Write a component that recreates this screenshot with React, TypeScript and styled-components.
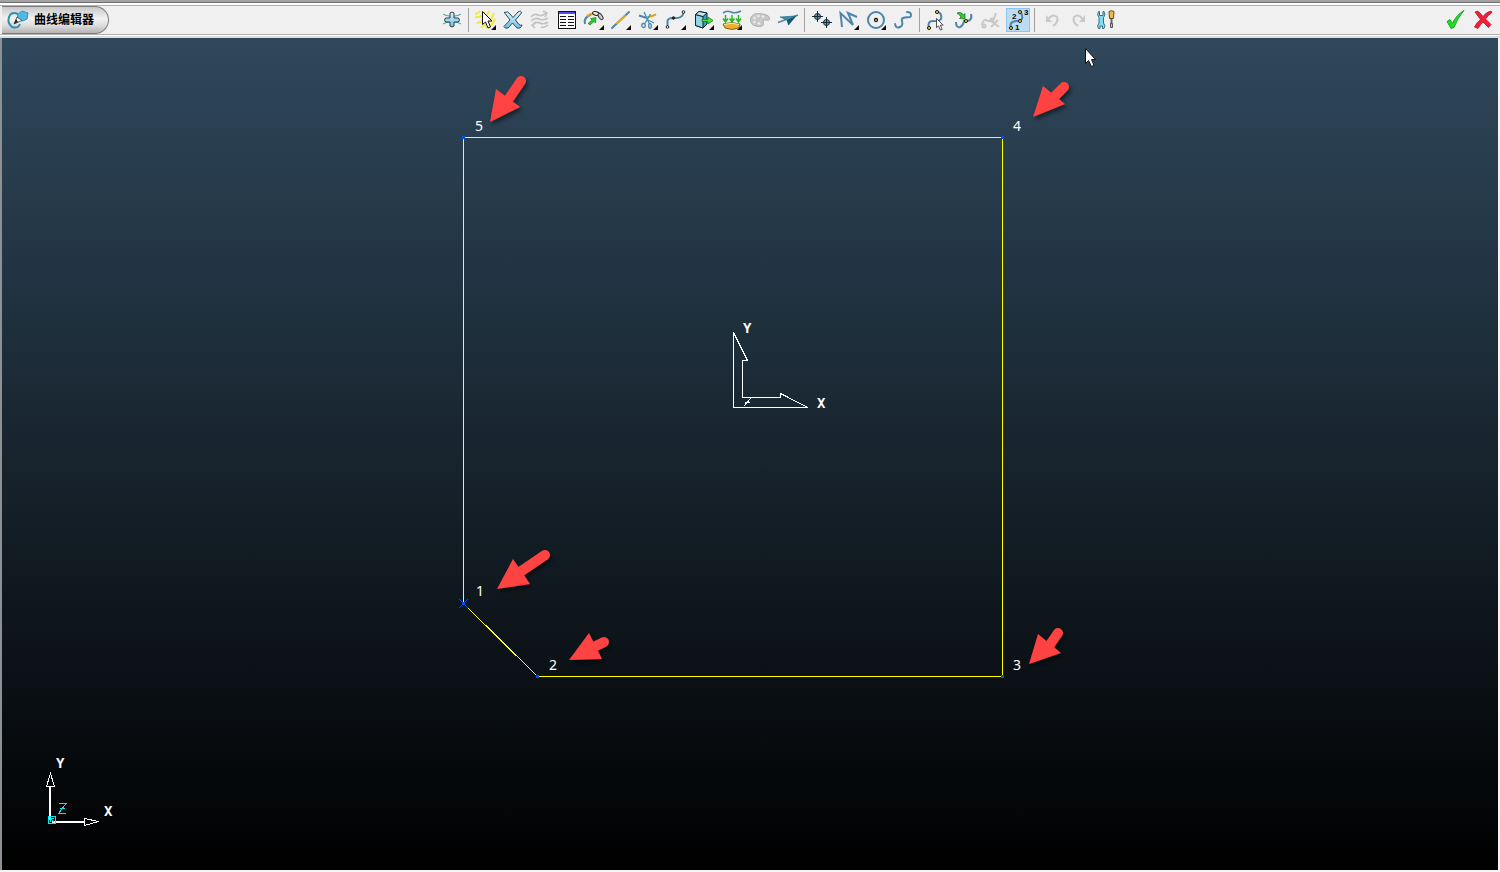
import React from "react";
import styled, { createGlobalStyle } from "styled-components";

const GlobalStyle = createGlobalStyle`
  * { box-sizing: border-box; }
  html, body, #root { height: 100%; }
  body { margin: 0; background: #f0f0f0; font-family: "Liberation Sans", "Noto Sans CJK SC", sans-serif; }
`;

const Window = styled.div`
  display: flex;
  flex-direction: column;
  height: 100%;
  border-top: 2px solid #a3a3a3;
  border-bottom: 2px solid #f4f4f4;
`;

const Toolbar = styled.header`
  display: flex;
  align-items: center;
  height: 36px;
  flex: none;
  padding: 0 3px 0 2px;
  background: #f0f0f0;
  border-top: 1px solid #6f6f6f;
  border-bottom: 2px solid #dcdcdc;
  box-shadow: inset 0 2px #fff, inset 0 3px #b0b0b0, inset 0 -1px #fff, inset 0 -2px #b0b0b0;
`;

const Title = styled.h1`
  display: flex;
  align-items: center;
  gap: 4px;
  height: 28px;
  margin: 0;
  padding: 0 14px 0 4px;
  border: 1px solid #7c7c7c;
  border-left: 0;
  border-radius: 0 14px 14px 0;
  background: linear-gradient(#c8c8c8, #f2f2f2 45%, #dedede 70%, #b4b4b4);
  color: #000;
  font-size: 12px;
  font-weight: 700;
  line-height: 16px;
`;

const Tools = styled.div`
  display: flex;
  flex: 1;
  justify-content: center;
  padding-left: 7px;
`;

const Group = styled.div`
  display: flex;
  align-items: center;
  height: 24px;
  padding: 0 3px;
  & + & { border-left: 1px solid #a0a0a0; }
`;

const ToolButton = styled.button<{ $wide?: boolean }>`
  display: flex;
  align-items: center;
  justify-content: center;
  width: ${(p) => (p.$wide ? 28 : 27)}px;
  height: 24px;
  padding: 0;
  border: 0;
  background: transparent;
  &[aria-pressed="true"] svg {
    background: #bcdcf4;
    outline: 1px solid #90c4f0;
    outline-offset: -1px;
  }
`;

const Icon = styled.svg`
  display: block;
  width: 24px;
  height: 24px;
  overflow: visible;
`;

const Viewport = styled.main`
  flex: 1;
  min-height: 0;
  border-left: 2px solid #8c9196;
  border-right: 2px solid #f4f4f4;
  background: linear-gradient(#2f485c, #000);
  overflow: hidden;
`;

const Scene = styled.svg`
  display: block;
  width: 100%;
  height: 100%;
`;

const PointLabel = styled.text`
  fill: #fff;
  font: 400 14px "Noto Sans", sans-serif;
`;

const AxisLabel = styled.text`
  fill: #fff;
  font: 700 14px "DejaVu Sans Mono", monospace;
`;

const BLUE = "#4b86ad";
const Dot = ({ x, y, fill = "#e8c020", r = 2 }: { x: number; y: number; fill?: string; r?: number }) => (
  <circle cx={x} cy={y} r={r} fill={fill} stroke="#222" />
);
const Cursor = ({ x, y, size = 1 }: { x: number; y: number; size?: number }) => (
  <path
    transform={`translate(${x} ${y}) scale(${size})`}
    d="M0 0V13L3 10.500L5.500 16.500L8 15.500L5.500 9.500H9.500Z"
    fill="#fff"
    stroke="#111"
  />
);

type Tool = { label: string; menu?: boolean; wide?: boolean; pressed?: boolean; disabled?: boolean; art: React.ReactNode };

const groups: Tool[][] = [
  [
    {
      label: "插入",
      art: (
        <g fill="none">
          <path d="M3 6C8 9 16 9 21 6M3 16C8 13 16 13 21 16" stroke="#3d9b9e" />
          <path
            d="M10 5Q12 3 14 5V10H18.500Q20.500 12 18.500 14H14V18Q12 20 10 18V14H5.500Q3.500 12 5.500 10H10Z"
            fill="url(#ice)"
            stroke="#243c50"
          />
        </g>
      ),
    },
  ],
  [
    {
      label: "选择",
      menu: true,
      art: (
        <>
          <path
            d="M1 9Q7 10 11 4M3 15Q11 14 15 3M7 19Q16 16 20 5M12 20Q19 17 21 11M1 6Q4 6 6 3"
            fill="none"
            stroke="#f4ea2c"
            strokeWidth="2"
          />
          <Cursor x={8.5} y={3.5} />
        </>
      ),
    },
    {
      label: "删除",
      art: (
        <path
          d="M3 4.500Q7 2.500 9 6L12 9.500L17 4Q20 2 20.500 5L14.500 12L17.500 16Q19.500 18 21 17Q20 21 16 20L11.500 15L7 20Q4 21 3 18.500L9 12L6 8Q5 6 3 4.500Z"
          fill="url(#ice)"
          stroke="#2c485e"
        />
      ),
    },
    {
      label: "变形",
      disabled: true,
      art: (
        <path
          d="M3 9Q6 5 10 7T18 5M15 3L19 5L17 9M3 13Q7 9 11 11T20 10M20 14Q16 17 12 15T5 17M8 14L4 17L7 20M13 19Q17 20 20 17"
          fill="none"
          stroke="#c2c2c2"
          strokeWidth="1.600"
        />
      ),
    },
    {
      label: "列表",
      art: (
        <>
          <rect x="3.500" y="3.500" width="17" height="17" fill="#fff" stroke="#111" />
          <path d="M4 5H20" stroke="#4d50ef" strokeWidth="2" />
          <path d="M5 8.500H11M13 8.500H19M5 11.500H11M13 11.500H19M5 14.500H11M13 14.500H19M5 17.500H11M13 17.500H19" stroke="#111" />
        </>
      ),
    },
    {
      label: "修改",
      menu: true,
      art: (
        <g fill="none">
          <path d="M3 16Q1 10 9 6.500" stroke={BLUE} strokeWidth="2" />
          <path d="M5 8.500Q8 5 13 6" stroke="#dfa51d" strokeWidth="2" />
          <ellipse cx="14" cy="5.500" rx="3.500" ry="1.800" fill="#eee" stroke="#222" transform="rotate(15 14 5.500)" />
          <ellipse cx="18.500" cy="8.500" rx="1.800" ry="3.500" fill="#ccc" stroke="#333" transform="rotate(-35 18.500 8.500)" />
          <path d="M6 15.500L10 12L8.500 10.500L14 9.500L13.500 15L12 13.500L8 17Z" fill="#28c82e" stroke="#17751c" strokeWidth=".6" />
        </g>
      ),
    },
    {
      label: "直线",
      menu: true,
      art: (
        <g strokeWidth="2" strokeLinecap="round">
          <path d="M3 20L20 4" stroke={BLUE} />
          <path d="M8 15L16 8" stroke="#e6ae22" />
        </g>
      ),
    },
    {
      label: "修剪",
      menu: true,
      wide: true,
      art: (
        <g fill="none" stroke={BLUE}>
          <path d="M3 7.500L11 10" strokeWidth="2" />
          <path d="M11 9.500Q15 8.500 20 6.500" stroke="#dfa51d" strokeWidth="2" />
          <path d="M8 4L13.500 16M14.500 6L8.500 16M12 12L18 15" stroke="#3f93aa" strokeWidth="1.300" />
          <ellipse cx="7.500" cy="17.500" rx="1.800" ry="2" strokeWidth="1.300" />
          <ellipse cx="14" cy="18" rx="1.300" ry="2.300" strokeWidth="1.300" />
        </g>
      ),
    },
    {
      label: "样条曲线",
      menu: true,
      wide: true,
      art: (
        <>
          <path d="M3.500 19V13Q4 10 9 10Q19 11 19.500 4" fill="none" stroke={BLUE} strokeWidth="2" />
          <Dot x={3.5} y={19} fill="#fff" r={1.3} />
          <Dot x={9.5} y={10} fill="#222" r={1.3} />
          <Dot x={19.5} y={4} fill="#fff" r={1.3} />
        </>
      ),
    },
    {
      label: "提取",
      menu: true,
      wide: true,
      art: (
        <>
          <path d="M3.500 6.500L7 3.500L15 5V16L11 20L3.500 17.500Z" fill="#3d9dbd" stroke="#14232a" />
          <path d="M3.500 6.500L11 8.500V20L3.500 17.500Z" fill="#8fd6ea" stroke="#14232a" />
          <path d="M3.500 6.500L7 3.500L15 5L11 8.500Z" fill="#c0e9f4" stroke="#14232a" />
          <path d="M10 11.500H16V9L21 12.500L16 16V13.500H10Z" fill="#4bed29" stroke="#1e7516" strokeWidth=".8" />
        </>
      ),
    },
    {
      label: "投影",
      menu: true,
      wide: true,
      art: (
        <>
          <path d="M3 5Q7 2 11 4T21 3" fill="none" stroke={BLUE} strokeWidth="1.600" />
          <path d="M3 16Q12 13 20 16L19 20Q12 23 5 20Z" fill="#ecae2b" stroke="#6b4a12" strokeWidth=".8" />
          <path d="M4 16.500Q12 14 19 16.500" fill="none" stroke="#fff0a0" />
          <path
            d="M5.500 7V13M12 7V13M18.500 7V13M3 10.500L5.500 14L8 10.500M9.500 10.500L12 14L14.500 10.500M16 10.500L18.500 14L21 10.500"
            fill="none"
            stroke="#28b91e"
            strokeWidth="1.500"
          />
        </>
      ),
    },
    {
      label: "颜色",
      disabled: true,
      wide: true,
      art: (
        <>
          <path d="M2.500 13Q2 6 10 5.500Q21 6 21.500 10Q22 13 18 12Q15 11 15 14Q17 17 13 18.500Q4 19 2.500 13Z" fill="#c9c9c9" stroke="#b0b0b0" />
          <g fill="#f0f0f0">
            <circle cx="6.500" cy="10" r="1.200" />
            <circle cx="10.500" cy="8" r="1.200" />
            <circle cx="15" cy="8.500" r="1.200" />
            <circle cx="6.500" cy="14" r="1.200" />
            <circle cx="11" cy="15.500" r="1.200" />
          </g>
        </>
      ),
    },
    {
      label: "方向",
      art: (
        <>
          <path d="M2 14.500L22 7" stroke={BLUE} strokeWidth="1.500" />
          <path d="M4 9L20 8L12.500 17L11 12Z" fill="#348caf" stroke="#24617c" strokeWidth=".6" />
          <path d="M11 12L20 8L12.500 17Z" fill="#185672" />
        </>
      ),
    },
  ],
  [
    {
      label: "点",
      art: (
        <g fill="#6b9fbd" stroke="#162a36">
          <circle cx="7.500" cy="8.500" r="3" />
          <path d="M7.500 3V14M2 8.500H13" />
          <circle cx="16.500" cy="14.500" r="3" />
          <path d="M16.500 9V20M11 14.500H22" />
        </g>
      ),
    },
    { label: "折线", menu: true, art: <path d="M5 19L3.500 5L16 17L11 5L20 9" fill="none" stroke={BLUE} strokeWidth="2" /> },
    {
      label: "圆",
      menu: true,
      art: (
        <>
          <circle cx="12" cy="12" r="8" fill="none" stroke={BLUE} strokeWidth="2" />
          <circle cx="12" cy="12" r="1.500" fill="#fff" stroke="#111" strokeWidth="1.300" />
        </>
      ),
    },
    {
      label: "曲线",
      art: <path d="M4 16Q5 21 9 19C15 16 8 12 12 10C17 8 20 11 20 7Q20 4 16 4" fill="none" stroke={BLUE} strokeWidth="2" strokeLinecap="round" />,
    },
  ],
  [
    {
      label: "选择点",
      art: (
        <>
          <path d="M4 20Q2 13 8 13Q18 14 16 7Q15 4 12 4" fill="none" stroke={BLUE} strokeWidth="2" />
          <Dot x={12} y={4} r={1.6} />
          <Dot x={4} y={20} r={1.6} />
          <Cursor x={11.5} y={10.5} size={0.7} />
        </>
      ),
    },
    {
      label: "插入点",
      art: (
        <>
          <path d="M4 14Q4 20 8 19Q11 18 12 13Q21 14 19 6" fill="none" stroke={BLUE} strokeWidth="2" />
          <path d="M5 5Q9 3 11.500 7L13 5.500V11L7.500 10.500L9 9Q8 7 5 5Z" fill="#32c53a" stroke="#196f20" strokeWidth=".7" />
          <Dot x={14} y={13} r={1.6} />
        </>
      ),
    },
    {
      label: "删除点",
      disabled: true,
      art: (
        <g fill="none" stroke="#c8c8c8" strokeWidth="2">
          <path d="M3 17Q4 10 9 13Q15 14 17 5M11 12L20 19M19 12L12 19" />
          <circle cx="5" cy="18" r="1.500" />
          <circle cx="13" cy="12" r="1.500" />
        </g>
      ),
    },
    {
      label: "点编号",
      pressed: true,
      art: (
        <>
          <path d="M5 19Q3 14 10 13Q19 13 15 5" fill="none" stroke={BLUE} strokeWidth="2" />
          <Dot x={14} y={4} r={1.6} />
          <Dot x={14} y={13} r={1.6} />
          <Dot x={5} y={20} r={1.6} />
          <g fill="#050510" fontFamily="Liberation Sans, sans-serif" fontSize="8" fontWeight="700">
            <text x="6" y="11">2</text>
            <text x="18" y="7">3</text>
            <text x="9" y="22">1</text>
          </g>
        </>
      ),
    },
  ],
  [
    {
      label: "撤销",
      disabled: true,
      art: (
        <g fill="none" stroke="#c9c9c9" strokeWidth="2">
          <path d="M8 12Q12 5 17 9Q19 14 13 18" />
          <path d="M6 7V14H12Z" fill="#c9c9c9" stroke="none" />
        </g>
      ),
    },
    {
      label: "重做",
      disabled: true,
      art: (
        <g fill="none" stroke="#c9c9c9" strokeWidth="2">
          <path d="M16 12Q12 5 7 9Q5 14 11 18" />
          <path d="M18 7V14H12Z" fill="#c9c9c9" stroke="none" />
        </g>
      ),
    },
    {
      label: "选项",
      art: (
        <>
          <path
            d="M4.500 3.500Q2.500 7 5 9.500V15Q2.500 18 4.500 20.500H6V18H8.500V20.500H10Q12 18 9.500 15V9.500Q12 7 10 3.500H9V7.500H5.500V3.500Z"
            fill="#7fdcf2"
            stroke="#3b6f80"
          />
          <path d="M15 3.500Q17.500 2 20 3.500L19.500 10.500H15.500Z" fill="#e4bd59" stroke="#644c23" />
          <path d="M17.500 11V16" stroke="#666" strokeWidth="2" />
          <path d="M16.500 15.500H18.500V19.500H16.500Z" fill="#bbb" stroke="#555" />
        </>
      ),
    },
  ],
];

// Every arrow is a head (tip and two barbs) with a round-ended shaft.
const arrows = [
  { head: "488,84 494,51 518,69", shaft: "M506 62L519 43" },
  { head: "1031,79 1041,48 1063,66", shaft: "M1051 60L1062 49" },
  { head: "1027,626 1036,596 1059,615", shaft: "M1047 608L1056 595" },
  { head: "495,551 511,521 528,546", shaft: "M518 534L543 517" },
  { head: "567,622 587,595 600,621", shaft: "M592 609L602 604" },
];

const vertices = [
  { n: 1, x: 461, y: 565, tx: 474, ty: 558 },
  { n: 2, x: 535, y: 638, tx: 547, ty: 632 },
  { n: 3, x: 1000, y: 638, tx: 1011, ty: 632 },
  { n: 4, x: 1000, y: 99, tx: 1011, ty: 93 },
  { n: 5, x: 461, y: 99, tx: 473, ty: 93 },
];

const ToolItem = ({ tool }: { tool: Tool }) => (
  <ToolButton type="button" aria-label={tool.label} aria-pressed={tool.pressed} disabled={tool.disabled} $wide={tool.wide}>
    <Icon viewBox="0 0 24 24" aria-hidden="true">
      {tool.art}
      {tool.menu && <path d="M22 17V22H17Z" fill="#160808" />}
    </Icon>
  </ToolButton>
);

export default function App() {
  return (
    <Window>
      <GlobalStyle />
      <Toolbar>
        <Title>
          <Icon viewBox="0 0 24 24" aria-hidden="true">
            <path d="M12 6Q5 3 3 9Q1 15 6 19Q12 21 14 16" fill="none" stroke="#2d91ad" strokeWidth="2" />
            <path d="M12 6L16 3L22 5L21 11L17 13L11 11Z" fill="#4fb9e2" stroke="#3695b5" />
            <path d="M8 16L11 9L16 12.500Z" fill="#f4f4f4" stroke="#444" strokeWidth=".8" />
            <path d="M8 16L10 11L12 14Z" fill="#222" />
          </Icon>
          曲线编辑器
        </Title>
        <Tools role="toolbar">
          {groups.map((group, i) => (
            <Group key={i}>
              {group.map((tool) => (
                <ToolItem key={tool.label} tool={tool} />
              ))}
            </Group>
          ))}
        </Tools>
        <ToolButton type="button" aria-label="确定" $wide>
          <Icon viewBox="0 0 24 24" aria-hidden="true">
            <path d="M4 13.500L7 11.500L9.500 15.500Q13 7 21 2.500Q14.500 10 11 19.500L8 20.500Z" fill="#18e51c" stroke="#128b24" strokeWidth=".8" />
          </Icon>
        </ToolButton>
        <ToolButton type="button" aria-label="取消" $wide>
          <Icon viewBox="0 0 24 24" aria-hidden="true">
            <path
              d="M4 4Q7 2 9 5L12 8.500Q15 4 20 3L21 4.500Q17 7 14.500 11L20 16.500L17.500 19.500L12 14Q9 17 7 20.500L3.500 19Q6 14 9.500 11.500Z"
              fill="#f51f35"
              stroke="#a71835"
              strokeWidth=".8"
            />
          </Icon>
        </ToolButton>
      </Toolbar>
      <Viewport>
        <Scene aria-label="曲线编辑器">
          <defs>
            <linearGradient id="ice" x1="0" y1="0" x2="0" y2="1">
              <stop offset="0" stopColor="#e0f6fd" />
              <stop offset="1" stopColor="#6fc0e2" />
            </linearGradient>
            <filter id="shade" x="-20%" y="-20%" width="150%" height="150%">
              <feDropShadow dx="2" dy="3" stdDeviation="2" floodColor="#000" floodOpacity=".5" />
            </filter>
          </defs>
          <path d="M461.500 565.500V99.500H1000.500V638.500H535.500Z" fill="none" stroke="#ffff00" shapeRendering="crispEdges" />
          {vertices.map((v) => (
            <g key={v.n}>
              <rect x={v.x - 1} y={v.y - 1} width="3" height="3" fill="#0050e6" />
              <PointLabel x={v.tx} y={v.ty}>{v.n}</PointLabel>
            </g>
          ))}
          <path d="M457 561L466 570M466 561L457 570" stroke="#0050e6" />
          <g fill="none" stroke="#fff" shapeRendering="crispEdges">
            <path d="M731.500 294.500V369.500H806L778.500 355.500V359.500H740.500V322.500H745.500L731.500 294.500" />
            <path d="M748.500 360.500L741.500 368.500M743 364.500H748" />
          </g>
          <AxisLabel x="741" y="295">Y</AxisLabel>
          <AxisLabel x="815" y="370">X</AxisLabel>
          <g fill="none" stroke="#fff" shapeRendering="crispEdges">
            <path d="M48 749V782M50 784H82" strokeWidth="2" />
            <path d="M48.500 735.500L44.500 748.500H52.500ZM82.500 780.500V787.500L96.500 783.500Z" />
          </g>
          <path d="M46.500 778.500H53.500V785.500H46.500ZM48.500 780.500L52 784M48.500 784V780.500H52" fill="none" stroke="#00f0f0" shapeRendering="crispEdges" />
          <path d="M56.500 765.500H64L56.500 775.500H64M58 770.500H63" fill="none" stroke="#00f0f0" shapeRendering="crispEdges" />
          <AxisLabel x="54" y="730">Y</AxisLabel>
          <AxisLabel x="102" y="778">X</AxisLabel>
          {arrows.map((a) => (
            <g key={a.head} filter="url(#shade)">
              <polygon points={a.head} fill="#ff4242" />
              <path d={a.shaft} stroke="#ff4242" strokeWidth="10" strokeLinecap="round" />
            </g>
          ))}
          <path d="M1083.500 10.500V25.500L1086.500 22.500L1089.500 28.500L1092 27.500L1089.500 21.500H1093.500Z" fill="#fff" stroke="#111" />
        </Scene>
      </Viewport>
    </Window>
  );
}
